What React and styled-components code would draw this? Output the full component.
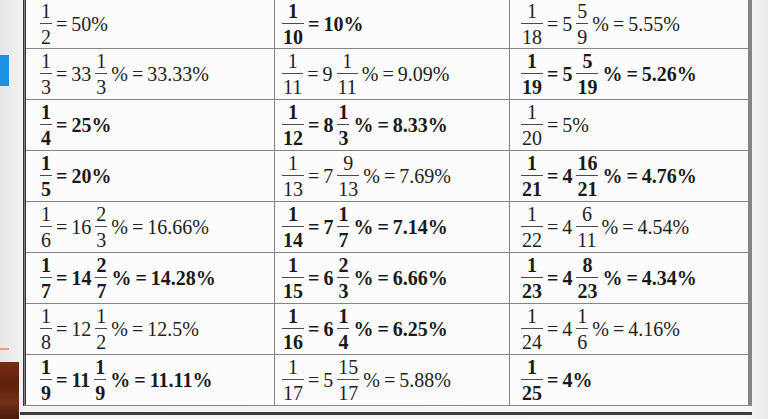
import React from "react";
import styled, { createGlobalStyle } from "styled-components";

const Global = createGlobalStyle`
  html, body { margin: 0; padding: 0; }
  body {
    width: 768px;
    height: 419px;
    overflow: hidden;
    background: linear-gradient(90deg, #e6e6e6 0%, #f3f3f3 3%, #f7f7f7 97%, #ebebeb 100%);
    font-family: "Liberation Serif", "Times New Roman", serif;
  }
`;

const Page = styled.div`
  display: flex;
  width: 768px;
  height: 419px;
`;

const Gutter = styled.div`
  width: 23px;
  flex: none;
  display: flex;
  flex-direction: column;
  align-items: flex-start;
`;

const BlueTab = styled.div`
  margin-top: 55px;
  width: 9px;
  height: 31px;
  background: #1c90e2;
`;

const OrangeMark = styled.div`
  margin-top: 262px;
  width: 9px;
  height: 2px;
  background: #f0a070;
`;

const Wood = styled.div`
  margin-top: 12px;
  width: 19px;
  flex: 1;
  background: linear-gradient(180deg, #7a2e12 0%, #5c200b 40%, #74301a 70%, #4a1a08 100%);
`;

const Main = styled.div`
  display: flex;
  flex-direction: column;
`;

const Table = styled.div`
  display: grid;
  grid-auto-flow: column;
  grid-template-columns: 248px 234px 238px;
  grid-template-rows: 48px repeat(7, 50px);
  gap: 1px;
  background: #858585;
  border: 1px solid #858585;
  border-top: none;
  border-left: 3px double #333;
`;

const Cell = styled.div`
  background: #fcfcfc;
  display: flex;
  align-items: center;
  gap: 4px;
  padding-left: ${(p) => p.$pad}px;
  font-family: "Liberation Serif", "Times New Roman", serif;
  font-size: 20px;
  line-height: 20px;
  font-weight: ${(p) => (p.$bold ? 700 : 400)};
  color: ${(p) => (p.$bold ? "#1a1a1a" : "#222")};
  white-space: nowrap;
`;

const Frac = styled.span`
  display: inline-flex;
  flex-direction: column;
  align-items: center;
  line-height: 20px;
`;

const Part = styled.span`
  padding: 0 1px;
`;

const Bar = styled.span`
  align-self: stretch;
  height: 1px;
  background: #4a4a4a;
  margin: 2px 0 3px;
`;

const Text = styled.span``;

const BottomRule = styled.div`
  margin-top: 6px;
  margin-left: -3px;
  width: 732px;
  height: 3px;
  background: #3c3c3c;
`;

const F = ({ n, d }) => (
  <Frac>
    <Part>{n}</Part>
    <Bar />
    <Part>{d}</Part>
  </Frac>
);

const rows = [
  { d: 2, v: "50%", b: false },
  { d: 3, w: "33", fn: 1, fd: 3, v: "33.33%", b: false },
  { d: 4, v: "25%", b: true },
  { d: 5, v: "20%", b: true },
  { d: 6, w: "16", fn: 2, fd: 3, v: "16.66%", b: false },
  { d: 7, w: "14", fn: 2, fd: 7, v: "14.28%", b: true },
  { d: 8, w: "12", fn: 1, fd: 2, v: "12.5%", b: false },
  { d: 9, w: "11", fn: 1, fd: 9, v: "11.11%", b: true },
  { d: 10, v: "10%", b: true },
  { d: 11, w: "9", fn: 1, fd: 11, v: "9.09%", b: false },
  { d: 12, w: "8", fn: 1, fd: 3, v: "8.33%", b: true },
  { d: 13, w: "7", fn: 9, fd: 13, v: "7.69%", b: false },
  { d: 14, w: "7", fn: 1, fd: 7, v: "7.14%", b: true },
  { d: 15, w: "6", fn: 2, fd: 3, v: "6.66%", b: true },
  { d: 16, w: "6", fn: 1, fd: 4, v: "6.25%", b: true },
  { d: 17, w: "5", fn: 15, fd: 17, v: "5.88%", b: false },
  { d: 18, w: "5", fn: 5, fd: 9, v: "5.55%", b: false },
  { d: 19, w: "5", fn: 5, fd: 19, v: "5.26%", b: true },
  { d: 20, v: "5%", b: false },
  { d: 21, w: "4", fn: 16, fd: 21, v: "4.76%", b: true },
  { d: 22, w: "4", fn: 6, fd: 11, v: "4.54%", b: false },
  { d: 23, w: "4", fn: 8, fd: 23, v: "4.34%", b: true },
  { d: 24, w: "4", fn: 1, fd: 6, v: "4.16%", b: false },
  { d: 25, v: "4%", b: true },
];

const pads = [14, 7, 11];

export default function App() {
  return (
    <>
      <Global />
      <Page>
        <Gutter>
          <BlueTab />
          <OrangeMark />
          <Wood />
        </Gutter>
        <Main>
          <Table>
            {rows.map((r, i) => (
              <Cell key={r.d} $pad={pads[Math.floor(i / 8)]} $bold={r.b}>
                <F n={1} d={r.d} />
                <Text>=</Text>
                {r.w ? (
                  <>
                    <Text>{r.w}</Text>
                    <F n={r.fn} d={r.fd} />
                    <Text>%</Text>
                    <Text>=</Text>
                  </>
                ) : null}
                <Text>{r.v}</Text>
              </Cell>
            ))}
          </Table>
          <BottomRule />
        </Main>
      </Page>
    </>
  );
}
